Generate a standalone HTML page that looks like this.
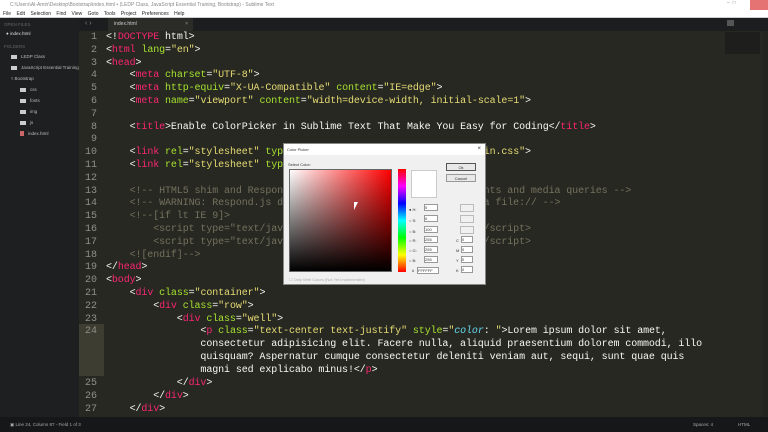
<!DOCTYPE html>
<html><head><style>
*{margin:0;padding:0;box-sizing:border-box}
body{width:768px;height:432px;overflow:hidden;background:#272822;font-family:"Liberation Sans",sans-serif;position:relative}
.abs{position:absolute}
#title{left:0;top:0;width:768px;height:10px;background:#fff;font-size:5px;color:#888;line-height:10px;padding-left:10px;white-space:nowrap}
#menu{left:0;top:10px;width:768px;height:8px;background:#fff;font-size:5px;color:#222;line-height:8px;padding-left:3px;word-spacing:4px;white-space:nowrap;border-bottom:1px solid #ccc}
#side{left:0;top:18px;width:79px;height:399px;background:#1d1f20;font-size:4.5px;color:#bbb}
#side div{position:absolute;white-space:nowrap}
.fo{display:inline-block;width:6px;height:4px;background:#ccc;margin-right:4px;vertical-align:middle}
#tabs{left:79px;top:18px;width:689px;height:13px;background:#1b1d1f}
#tab{left:108px;top:18px;width:85px;height:13px;background:#2b2c28;font-size:5px;color:#ccc;line-height:13px;padding-left:6px}
.ln{position:absolute;left:79px;width:18px;text-align:right;font-family:"Liberation Mono",monospace;font-size:10px;color:#8f908a}
.cl{position:absolute;left:106px;font-family:"Liberation Mono",monospace;font-size:10px;letter-spacing:-0.1px;color:#f8f8f2;white-space:pre}
.t{color:#f92672}.a{color:#a6e22e}.s{color:#e6db74}.c{color:#75715e}.i{color:#66d9ef;font-style:italic}
#status{left:0;top:417px;width:768px;height:15px;background:#151719;font-size:4.5px;color:#aaa;line-height:15px}
#dlg{left:283px;top:143px;width:203px;height:142px;background:#f0f0f0;border:1px solid #888;font-size:4px;color:#333}
</style></head><body>
<div id="title" class="abs">C:\Users\Al-Amin\Desktop\Bootstrap\index.html • (LEDP Class, JavaScript Essential Training, Bootstrap) - Sublime Text</div>
<div class="abs" style="left:727px;top:0;width:10px;height:9px;font-size:5px;color:#888">–&nbsp; □</div>
<div class="abs" style="left:750px;top:0;width:18px;height:10px;background:#e57373"></div>
<div id="menu" class="abs">File Edit Selection Find View Goto Tools Project Preferences Help</div>
<div id="side" class="abs">
<div style="left:4px;top:4px;color:#666">OPEN FILES</div>
<div style="left:6px;top:13px;color:#ddd">● index.html</div>
<div style="left:4px;top:26px;color:#666">FOLDERS</div>
<div style="left:11px;top:36px"><span class="fo"></span>LEDP Class</div>
<div style="left:11px;top:47px"><span class="fo"></span>JavaScript Essential Training</div>
<div style="left:11px;top:58px">▿ Bootstrap</div>
<div style="left:20px;top:69px"><span class="fo"></span>css</div>
<div style="left:20px;top:80px"><span class="fo"></span>fonts</div>
<div style="left:20px;top:91px"><span class="fo"></span>img</div>
<div style="left:20px;top:102px"><span class="fo"></span>js</div>
<div style="left:20px;top:113px"><span class="fo" style="background:#c66;width:4px;height:5px"></span>index.html</div>
</div>
<div id="tabs" class="abs"><span style="position:absolute;left:6px;top:2px;color:#888;font-size:7px">‹ ›</span></div>
<div id="tab" class="abs">index.html<span style="position:absolute;right:5px;color:#999">×</span></div>
<div class="abs" style="left:79px;top:324px;width:25px;height:52px;background:#3e3d32"></div>
<div class="abs" style="left:725px;top:32px;width:35px;height:22px;background:#1e1f1c"></div>
<div class="abs" style="left:727px;top:20px;width:7px;height:6px;background:#555"></div>
<div class="abs" style="left:763px;top:31px;width:5px;height:386px;background:#232420"></div>

<div class="ln" style="top:32px">1</div><div class="cl" style="top:32px">&lt;!<span class="t">DOCTYPE</span> html&gt;</div>
<div class="ln" style="top:45px">2</div><div class="cl" style="top:45px">&lt;<span class="t">html</span> <span class="a">lang</span>=<span class="s">"en"</span>&gt;</div>
<div class="ln" style="top:58px">3</div><div class="cl" style="top:58px">&lt;<span class="t">head</span>&gt;</div>
<div class="ln" style="top:70px">4</div><div class="cl" style="top:70px">    &lt;<span class="t">meta</span> <span class="a">charset</span>=<span class="s">"UTF-8"</span>&gt;</div>
<div class="ln" style="top:83px">5</div><div class="cl" style="top:83px">    &lt;<span class="t">meta</span> <span class="a">http-equiv</span>=<span class="s">"X-UA-Compatible"</span> <span class="a">content</span>=<span class="s">"IE=edge"</span>&gt;</div>
<div class="ln" style="top:96px">6</div><div class="cl" style="top:96px">    &lt;<span class="t">meta</span> <span class="a">name</span>=<span class="s">"viewport"</span> <span class="a">content</span>=<span class="s">"width=device-width, initial-scale=1"</span>&gt;</div>
<div class="ln" style="top:109px">7</div>
<div class="ln" style="top:122px">8</div><div class="cl" style="top:122px">    &lt;<span class="t">title</span>&gt;Enable ColorPicker in Sublime Text That Make You Easy for Coding&lt;/<span class="t">title</span>&gt;</div>
<div class="ln" style="top:134px">9</div>
<div class="ln" style="top:147px">10</div><div class="cl" style="top:147px">    &lt;<span class="t">link</span> <span class="a">rel</span>=<span class="s">"stylesheet"</span> <span class="a">type</span>                                 <span class="s">in.css"</span>&gt;</div>
<div class="ln" style="top:160px">11</div><div class="cl" style="top:160px">    &lt;<span class="t">link</span> <span class="a">rel</span>=<span class="s">"stylesheet"</span> <span class="a">type</span></div>
<div class="ln" style="top:173px">12</div>
<div class="ln" style="top:186px">13</div><div class="cl c" style="top:186px">    &lt;!-- HTML5 shim and Respon                                ments and media queries --&gt;</div>
<div class="ln" style="top:198px">14</div><div class="cl c" style="top:198px">    &lt;!-- WARNING: Respond.js d                                via file:// --&gt;</div>
<div class="ln" style="top:211px">15</div><div class="cl c" style="top:211px">    &lt;!--[if lt IE 9]&gt;</div>
<div class="ln" style="top:224px">16</div><div class="cl c" style="top:224px">        &lt;script type="text/jav                                 &lt;/script&gt;</div>
<div class="ln" style="top:237px">17</div><div class="cl c" style="top:237px">        &lt;script type="text/jav                                &gt;&lt;/script&gt;</div>
<div class="ln" style="top:250px">18</div><div class="cl c" style="top:250px">    &lt;![endif]--&gt;</div>
<div class="ln" style="top:262px">19</div><div class="cl" style="top:262px">&lt;/<span class="t">head</span>&gt;</div>
<div class="ln" style="top:275px">20</div><div class="cl" style="top:275px">&lt;<span class="t">body</span>&gt;</div>
<div class="ln" style="top:288px">21</div><div class="cl" style="top:288px">    &lt;<span class="t">div</span> <span class="a">class</span>=<span class="s">"container"</span>&gt;</div>
<div class="ln" style="top:301px">22</div><div class="cl" style="top:301px">        &lt;<span class="t">div</span> <span class="a">class</span>=<span class="s">"row"</span>&gt;</div>
<div class="ln" style="top:314px">23</div><div class="cl" style="top:314px">            &lt;<span class="t">div</span> <span class="a">class</span>=<span class="s">"well"</span>&gt;</div>
<div class="ln" style="top:326px">24</div><div class="cl" style="top:326px">                &lt;<span class="t">p</span> <span class="a">class</span>=<span class="s">"text-center text-justify"</span> <span class="a">style</span>=<span class="s">"</span><span class="i">color</span>: <span class="s">"</span>&gt;Lorem ipsum dolor sit amet,</div>
<div class="cl" style="top:339px">                consectetur adipisicing elit. Facere nulla, aliquid praesentium dolorem commodi, illo</div>
<div class="cl" style="top:352px">                quisquam? Aspernatur cumque consectetur deleniti veniam aut, sequi, sunt quae quis</div>
<div class="cl" style="top:365px">                magni sed explicabo minus!&lt;/<span class="t">p</span>&gt;</div>
<div class="ln" style="top:378px">25</div><div class="cl" style="top:378px">            &lt;/<span class="t">div</span>&gt;</div>
<div class="ln" style="top:391px">26</div><div class="cl" style="top:391px">        &lt;/<span class="t">div</span>&gt;</div>
<div class="ln" style="top:404px">27</div><div class="cl" style="top:404px">    &lt;/<span class="t">div</span>&gt;</div>

<div id="status" class="abs"><span style="padding-left:10px">▣ Line 24, Column 87 - Field 1 of 3</span><span style="position:absolute;left:693px">Spaces: 4</span><span style="position:absolute;left:738px">HTML</span></div>

<div id="dlg" class="abs">
<div class="abs" style="left:0;top:0;width:201px;height:11px;background:#fff;line-height:11px;padding-left:3px">Color Picker<span style="position:absolute;right:4px;font-size:6px">×</span></div>
<div class="abs" style="left:4px;top:18px">Select Color:</div>
<div class="abs" style="left:5px;top:25px;width:103px;height:103px;background:linear-gradient(to top,#000,rgba(0,0,0,0)),linear-gradient(to right,#fff,#f00);border:1px solid #666"></div>
<div class="abs" style="left:70px;top:58px;width:0;height:0;border-left:4px solid #fff;border-top:0;border-bottom:8px solid transparent"></div>
<div class="abs" style="left:114px;top:25px;width:8px;height:103px;background:linear-gradient(#f00,#f0f,#00f,#0ff,#0f0,#ff0,#f00)"></div>
<div class="abs" style="left:127px;top:26px;width:26px;height:28px;background:#fff;border:1px solid #ccc"></div>
<div class="abs" style="left:162px;top:19px;width:30px;height:8px;background:#e8e8e8;border:1px solid #555;text-align:center;line-height:7px">Ok</div>
<div class="abs" style="left:162px;top:30px;width:30px;height:8px;background:#e8e8e8;border:1px solid #999;text-align:center;line-height:7px">Cancel</div>
<div class="abs" style="left:125px;top:60px;line-height:11px">● H:<br>○ S:<br>○ B:</div>
<div class="abs" style="left:140px;top:60px;width:14px;height:7px;background:#fff;border:1px solid #999">0</div>
<div class="abs" style="left:140px;top:71px;width:14px;height:7px;background:#fff;border:1px solid #999">0</div>
<div class="abs" style="left:140px;top:82px;width:14px;height:7px;background:#fff;border:1px solid #999">100</div>
<div class="abs" style="left:176px;top:60px;width:14px;height:8px;border:1px solid #bbb"></div>
<div class="abs" style="left:176px;top:71px;width:14px;height:8px;border:1px solid #bbb"></div>
<div class="abs" style="left:176px;top:82px;width:14px;height:8px;border:1px solid #bbb"></div>
<div class="abs" style="left:125px;top:92px;line-height:10px">○ R:<br>○ G:<br>○ B:</div>
<div class="abs" style="left:140px;top:92px;width:14px;height:7px;background:#fff;border:1px solid #999">255</div>
<div class="abs" style="left:140px;top:102px;width:14px;height:7px;background:#fff;border:1px solid #999">255</div>
<div class="abs" style="left:140px;top:112px;width:14px;height:7px;background:#fff;border:1px solid #999">255</div>
<div class="abs" style="left:172px;top:92px;line-height:10px">C<br>M<br>Y<br>K</div>
<div class="abs" style="left:177px;top:92px;width:12px;height:7px;background:#fff;border:1px solid #999">0</div>
<div class="abs" style="left:177px;top:102px;width:12px;height:7px;background:#fff;border:1px solid #999">0</div>
<div class="abs" style="left:177px;top:112px;width:12px;height:7px;background:#fff;border:1px solid #999">0</div>
<div class="abs" style="left:177px;top:122px;width:12px;height:7px;background:#fff;border:1px solid #999">0</div>
<div class="abs" style="left:128px;top:124px">#</div>
<div class="abs" style="left:133px;top:123px;width:22px;height:7px;background:#fff;border:1px solid #999">FFFFFF</div>
<div class="abs" style="left:5px;top:133px;color:#aaa">☐ Only Web Colors (Not Yet Implemented)</div>
</div>
</body></html>
